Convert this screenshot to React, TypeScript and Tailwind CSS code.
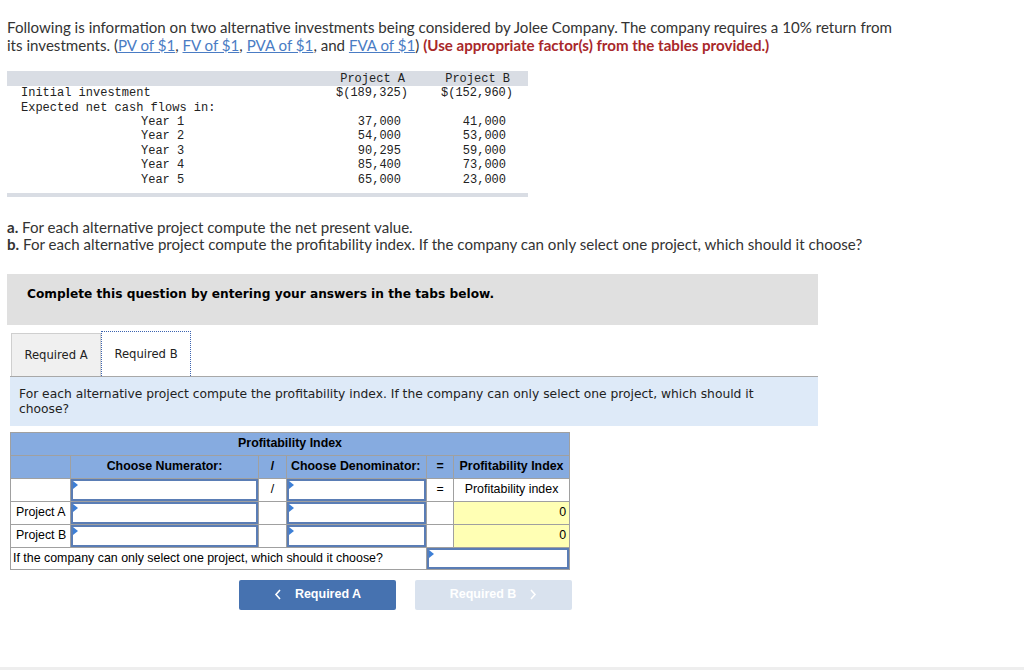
import React from "react";

const mono = { fontFamily: '"Liberation Mono", "Courier New", monospace' };

function Dd({ className = "" }: { className?: string }) {
  return (
    <div className={`relative h-full w-full border-2 border-[#5a7db5] bg-white ${className}`}>
      <span className="absolute left-0 top-0 h-0 w-0 border-b-[4px] border-l-[5px] border-t-[4px] border-b-transparent border-l-[#3d7fd6] border-t-transparent" />
    </div>
  );
}

export default function App() {
  const rows: [string, string, string][] = [
    ["Year 1", "37,000", "41,000"],
    ["Year 2", "54,000", "53,000"],
    ["Year 3", "90,295", "59,000"],
    ["Year 4", "85,400", "73,000"],
    ["Year 5", "65,000", "23,000"],
  ];
  const cell = "border border-[#a0a0a0]";
  return (
    <div className="relative min-h-[670px] bg-white text-[#333]" style={{ fontFamily: 'Lato, "Open Sans", sans-serif' }}>
      <div className="px-[7px] pt-[18px]">
        <p className="text-[15.1px] leading-[18px] text-[#333]">
          Following is information on two alternative investments being considered by Jolee Company. The company requires a 10% return from
          <br />
          its investments. (<span className="text-[#4a7cc4] underline">PV of $1</span>,{" "}
          <span className="text-[#4a7cc4] underline">FV of $1</span>,{" "}
          <span className="text-[#4a7cc4] underline">PVA of $1</span>, and{" "}
          <span className="text-[#4a7cc4] underline">FVA of $1</span>){" "}
          <span className="font-bold text-[#a8282a]">(Use appropriate factor(s) from the tables provided.)</span>
        </p>

        <div className="mt-[17px] w-[521px] text-[12px] text-[#222]" style={mono}>
          <div className="grid h-[15px] grid-cols-[320px_88px_113px] items-center bg-[#d9dde4] leading-[14px]">
            <div />
            <div className="pr-[10px] text-right">Project A</div>
            <div className="pr-[18px] text-right">Project B</div>
          </div>
          <div className="grid h-[14.4px] grid-cols-[320px_88px_113px] items-center leading-[14px]">
            <div className="pl-[14px]">Initial investment</div>
            <div className="pr-[7px] text-right">$(189,325)</div>
            <div className="pr-[15px] text-right">$(152,960)</div>
          </div>
          <div className="grid h-[14.4px] grid-cols-[320px_88px_113px] items-center leading-[14px]">
            <div className="pl-[14px]">Expected net cash flows in:</div>
            <div />
            <div />
          </div>
          {rows.map(([y, a, b]) => (
            <div key={y} className="grid h-[14.4px] grid-cols-[320px_88px_113px] items-center leading-[14px]">
              <div className="pl-[134px]">{y}</div>
              <div className="pr-[14px] text-right">{a}</div>
              <div className="pr-[22px] text-right">{b}</div>
            </div>
          ))}
          <div className="mt-[6px] h-[4px] bg-[#d9dde4]" />
        </div>

        <div className="mt-[22px] text-[15.1px] leading-[17px] text-[#333]">
          <p>
            <span className="font-bold">a.</span> For each alternative project compute the net present value.
          </p>
          <p>
            <span className="font-bold">b.</span> For each alternative project compute the profitability index. If the company can only select one project, which should it choose?
          </p>
        </div>

        <div
          className="mt-[21px] h-[51px] w-[811px] bg-[#e0e0e0] pl-[20px] pt-[13px] text-[12.2px] font-bold leading-[15px] text-black"
          style={{ fontFamily: '"DejaVu Sans", Verdana, sans-serif' }}
        >
          Complete this question by entering your answers in the tabs below.
        </div>

        <div className="ml-[3px] w-[808px]" style={{ fontFamily: '"DejaVu Sans", Verdana, sans-serif' }}>
          <div className="mt-[6px] flex items-end pl-[1px]">
            <div className="flex h-[43px] w-[90px] items-center justify-center border border-b-0 border-[#cfcfcf] bg-[#f0f0f0] pt-[2px] text-[11.6px] text-[#222]">
              Required A
            </div>
            <div className="flex h-[45px] w-[90px] items-center justify-center border border-b-0 border-dotted border-[#3b63b0] bg-white pt-[2px] text-[11.6px] text-[#222]">
              Required B
            </div>
          </div>
          <div className="h-[50px] border-t border-[#a8a8a8] bg-[#deeaf8] pl-[9px] pt-[10px] text-[12.3px] leading-[15px] text-[#222]">
            <p className="w-[765px]">
              For each alternative project compute the profitability index. If the company can only select one project, which should it choose?
            </p>
          </div>
        </div>

        <div className="ml-[3px] mt-[6px]" style={{ fontFamily: '"Liberation Sans", Arial, sans-serif' }}>
          <table className="w-[559px] table-fixed border-collapse text-[12.4px] text-black">
            <colgroup>
              <col className="w-[60px]" />
              <col className="w-[188px]" />
              <col className="w-[28px]" />
              <col className="w-[140px]" />
              <col className="w-[27px]" />
              <col className="w-[116px]" />
            </colgroup>
            <tbody>
              <tr className="h-[23px] bg-[#86abe0]">
                <td colSpan={6} className={`${cell} text-center font-bold`}>
                  Profitability Index
                </td>
              </tr>
              <tr className="h-[23px] bg-[#86abe0] font-bold">
                <td className={cell} />
                <td className={`${cell} text-center`}>Choose Numerator:</td>
                <td className={`${cell} text-center`}>/</td>
                <td className={`${cell} px-[4px] text-left`}>Choose Denominator:</td>
                <td className={`${cell} text-center`}>=</td>
                <td className={`${cell} whitespace-nowrap text-center`}>Profitability Index</td>
              </tr>
              <tr className="h-[23px]">
                <td className={cell} />
                <td className={`${cell} p-0`}>
                  <div className="h-[22px]"><Dd /></div>
                </td>
                <td className={`${cell} text-center`}>/</td>
                <td className={`${cell} p-0`}>
                  <div className="h-[22px]"><Dd /></div>
                </td>
                <td className={`${cell} text-center`}>=</td>
                <td className={`${cell} text-center`}>Profitability index</td>
              </tr>
              {["Project A", "Project B"].map((p) => (
                <tr key={p} className="h-[23px]">
                  <td className={`${cell} whitespace-nowrap pl-[5px] pr-0`}>{p}</td>
                  <td className={`${cell} p-0`}>
                    <div className="h-[22px]"><Dd /></div>
                  </td>
                  <td className={cell} />
                  <td className={`${cell} p-0`}>
                    <div className="h-[22px]"><Dd /></div>
                  </td>
                  <td className={cell} />
                  <td className={`${cell} bg-[#ffffb4] pr-[3px] text-right`}>0</td>
                </tr>
              ))}
              <tr className="h-[22px]">
                <td colSpan={4} className={`${cell} whitespace-nowrap pl-[2px]`}>
                  If the company can only select one project, which should it choose?
                </td>
                <td colSpan={2} className={`${cell} p-0`}>
                  <div className="h-[21px]"><Dd /></div>
                </td>
              </tr>
            </tbody>
          </table>

          <div className="mt-[10px] flex gap-[19px] pl-[229px]">
            <div className="flex h-[30px] w-[157px] items-center justify-center gap-[13px] rounded-[2px] bg-[#4672b0] text-[12.5px] font-bold text-white">
              <svg width="8" height="11" viewBox="0 0 8 11" fill="none">
                <polyline points="6,1 2,5.5 6,10" stroke="white" strokeWidth="1.6" />
              </svg>
              <span>Required A</span>
            </div>
            <div className="flex h-[30px] w-[157px] items-center justify-center gap-[13px] rounded-[2px] bg-[#d9e2ee] text-[12.5px] font-bold text-white">
              <span>Required B</span>
              <svg width="8" height="11" viewBox="0 0 8 11" fill="none">
                <polyline points="2,1 6,5.5 2,10" stroke="white" strokeWidth="1.6" />
              </svg>
            </div>
          </div>
        </div>
      </div>
      <div className="absolute bottom-0 left-0 h-[3px] w-full bg-[#eeeeee]" />
    </div>
  );
}
